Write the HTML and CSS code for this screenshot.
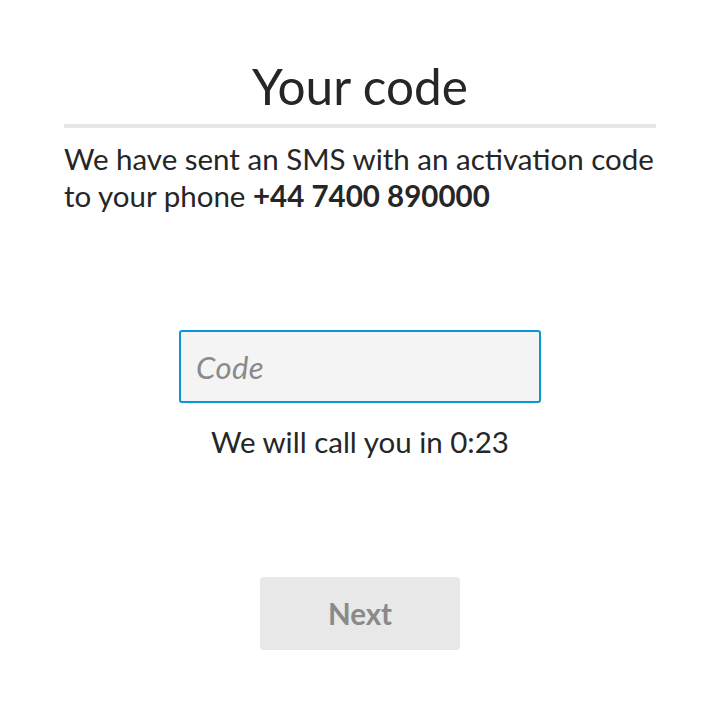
FILE: index.html
```html
<!DOCTYPE html>
<html lang="en">
<head>
<meta charset="utf-8">
<title>Your code</title>
<link rel="stylesheet" href="styles.css">
</head>
<body>
<main class="page">
  <h1 class="title">Your code</h1>
  <div class="divider"></div>
  <p class="intro">We have sent an SMS with an activation code to your phone <strong>+44 7400 890000</strong></p>
  <div class="field-wrap">
    <input class="code-input" type="text" placeholder="Code">
  </div>
  <p class="callback">We will call you in 0:23</p>
  <div class="actions">
    <button class="next-btn" type="button">Next</button>
  </div>
</main>
</body>
</html>
```

FILE: styles.css
```css
html, body {
  margin: 0;
  padding: 0;
  background: #ffffff;
}
body {
  font-family: "Lato", "Open Sans", sans-serif;
  color: #262626;
}
.page {
  width: 592px;
  margin: 0 auto;
  padding-top: 56px;
  display: flex;
  flex-direction: column;
}
.title {
  margin: 0;
  text-align: center;
  font-size: 49.5px;
  font-weight: 400;
  line-height: 60px;
  color: #262626;
}
.divider {
  height: 4px;
  background: #e6e6e6;
  margin-top: 8px;
}
.intro {
  margin: 12px 0 0;
  font-size: 29.5px;
  line-height: 37px;
}
.intro strong {
  font-weight: 700;
}
.field-wrap {
  display: flex;
  justify-content: center;
  margin-top: 116px;
}
.code-input {
  box-sizing: border-box;
  width: 362px;
  height: 73px;
  border: 2px solid #0a96d2;
  border-radius: 3px;
  background: #f4f4f4;
  padding: 0 15px;
  font-family: "Lato", sans-serif;
  font-size: 31px;
  letter-spacing: 0.5px;
  color: #262626;
  outline: none;
}
.code-input::placeholder {
  font-style: italic;
  color: #8a8a8a;
}
.callback {
  margin: 19px 0 0;
  text-align: center;
  font-size: 29.5px;
  line-height: 40px;
}
.actions {
  display: flex;
  justify-content: center;
  margin-top: 115px;
}
.next-btn {
  width: 200px;
  height: 73px;
  border: none;
  border-radius: 4px;
  background: #e8e8e8;
  color: #8a8a8a;
  font-family: "Lato", sans-serif;
  font-size: 29.5px;
  font-weight: 700;
}
```
